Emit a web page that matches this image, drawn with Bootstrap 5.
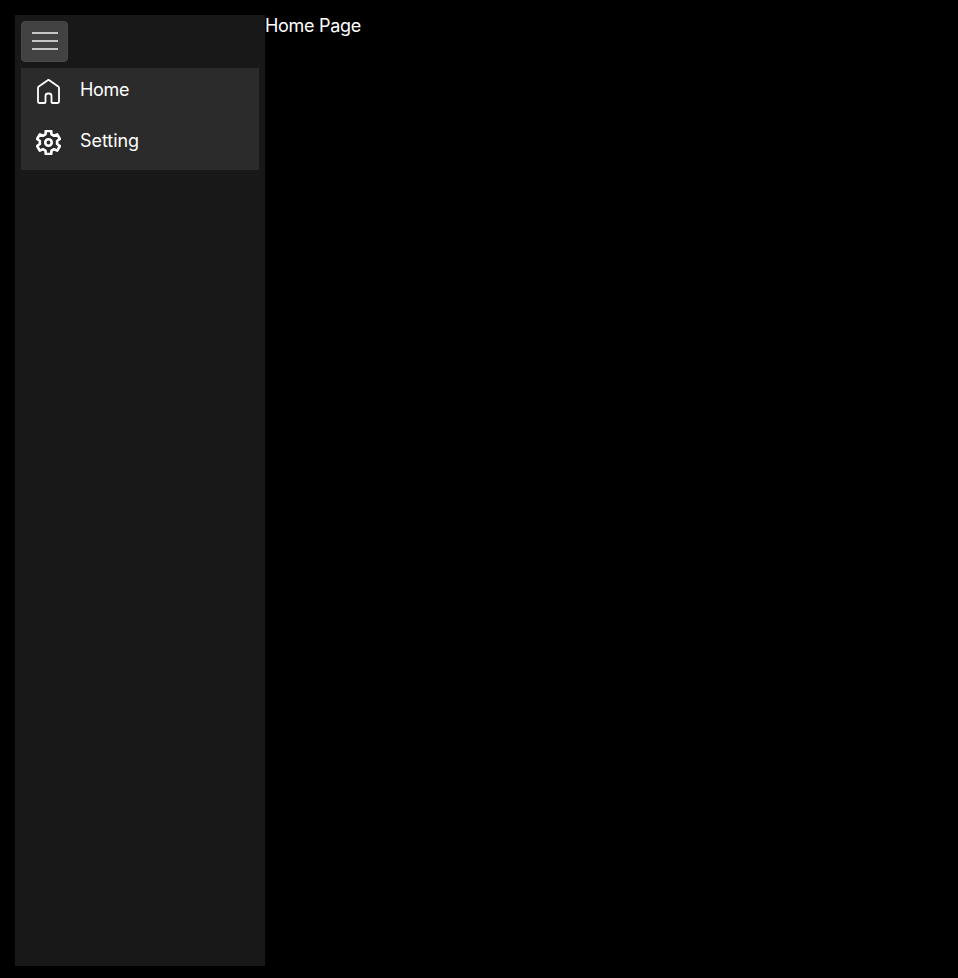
<!DOCTYPE html>
<html lang="en">
<head>
<meta charset="utf-8">
<title>Home Page</title>
<link href="https://cdn.jsdelivr.net/npm/bootstrap@5.3.0/dist/css/bootstrap.min.css" rel="stylesheet">
<style>
html,body{background:#000;color:#fff;font-family:Inter,"Liberation Sans",sans-serif;font-size:18px;line-height:22px;}
.shell{padding:15px 0 12px 15px;height:978px;}
.side{width:250px;background:#181818;padding:6px;}
.burger{width:47px;height:41px;background:#424242;border:1px solid #484848;border-radius:4px;padding:0 0 2px;margin-bottom:6px;}
.burger svg{display:block;margin:auto;}
.menu{background:#2b2b2b;height:102px;}
.entry{height:51px;color:#fff;text-decoration:none;padding-left:14px;}
.entry svg{flex:none;margin-right:18px;margin-bottom:5px;}
.entry .gear{margin-left:1px;margin-right:19px;}
.entry span{margin-bottom:7px;letter-spacing:-.3px;}
.entry:last-child span{letter-spacing:-.05px;}
.page-title{letter-spacing:-.3px;}
</style>
</head>
<body class="m-0">
<div class="shell d-flex">
  <nav class="side flex-shrink-0">
    <button class="burger d-block" type="button" aria-label="Menu">
      <svg width="26" height="20" viewBox="0 0 26 20" fill="none" stroke="#f2f2f2" stroke-width="1.4"><path d="M0 2h26M0 10h26M0 18h26"/></svg>
    </button>
    <div class="menu d-flex flex-column">
      <a class="entry d-flex align-items-center" href="#">
        <svg width="27" height="27" viewBox="0 0 27 27" fill="none" stroke="#fff" stroke-width="1.8" stroke-linejoin="round"><path d="M3 23.500V10q0-1 .8-1.600L13.500 1.800l9.700 6.600q.8.6.8 1.600V23.500q0 1.500-1.500 1.500H17.500q-1 0-1-1V18q0-2.500-2.500-2.500h-1q-2.500 0-2.500 2.500V24q0 1-1 1H4.500Q3 25 3 23.500z"/></svg>
        <span>Home</span>
      </a>
      <a class="entry d-flex align-items-center" href="#">
        <svg class="gear" width="25" height="25" viewBox="2 2 20 20" fill="none" stroke="#fff" stroke-width="2.100" stroke-linejoin="round"><path d="M9.600 5.420L9.860 2.740H14.140L14.400 5.420L16.500 6.640L18.950 5.520L21.080 9.220L18.890 10.780V13.220L21.080 14.780L18.950 18.480L16.500 17.360L14.400 18.580L14.140 21.260H9.860L9.600 18.580L7.500 17.360L5.050 18.480L2.920 14.780L5.110 13.220V10.780L2.920 9.220L5.050 5.520L7.500 6.640Z"/><circle cx="12" cy="12" r="2.600"/></svg>
        <span>Setting</span>
      </a>
    </div>
  </nav>
  <main class="page-title flex-grow-1">Home Page</main>
</div>
<script src="https://cdn.jsdelivr.net/npm/bootstrap@5.3.0/dist/js/bootstrap.bundle.min.js"></script>
</body>
</html>
